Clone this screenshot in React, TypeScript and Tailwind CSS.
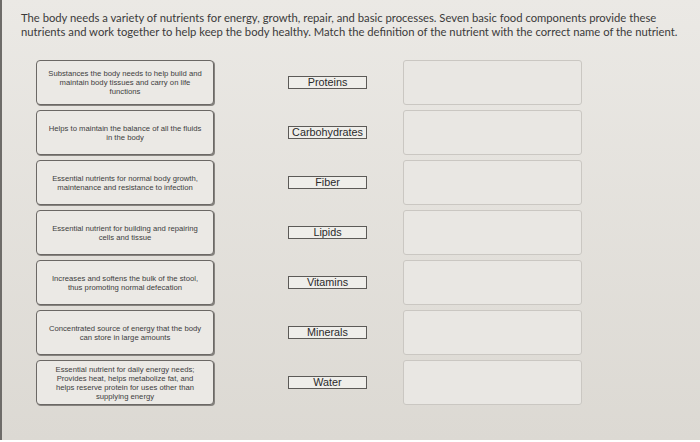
const rows = [
  {
    definition: ["Substances the body needs to help build and", "maintain body tissues and carry on life", "functions"],
    nutrient: "Proteins",
  },
  {
    definition: ["Helps to maintain the balance of all the fluids", "in the body"],
    nutrient: "Carbohydrates",
  },
  {
    definition: ["Essential nutrients for normal body growth,", "maintenance and resistance to infection"],
    nutrient: "Fiber",
  },
  {
    definition: ["Essential nutrient for building and repairing", "cells and tissue"],
    nutrient: "Lipids",
  },
  {
    definition: ["Increases and softens the bulk of the stool,", "thus promoting normal defecation"],
    nutrient: "Vitamins",
  },
  {
    definition: ["Concentrated source of energy that the body", "can store in large amounts"],
    nutrient: "Minerals",
  },
  {
    definition: [
      "Essential nutrient for daily energy needs;",
      "Provides heat, helps metabolize fat, and",
      "helps reserve protein for uses other than",
      "supplying energy",
    ],
    nutrient: "Water",
  },
];

export default function App() {
  return (
    <div className="h-[440px] w-[700px] border-l-2 border-[#6e6c69] bg-linear-to-b from-[#ebe9e5] to-[#dcd9d3] overflow-hidden">
      <p className="pl-[19px] pt-[11px] text-[11.25px] leading-[14px] text-[#3a3a3a] whitespace-nowrap font-['Lato',sans-serif]">
        The body needs a variety of nutrients for energy, growth, repair, and basic processes. Seven basic food components provide these
        <br />
        nutrients and work together to help keep the body healthy. Match the definition of the nutrient with the correct name of the nutrient.
      </p>

      <div className="mt-[21px] flex flex-col gap-[5px] pl-[34px]">
        {rows.map((row, i) => (
          <div key={i} className="flex items-center h-[45px]">
            <div className="w-[178px] h-full flex flex-col items-center justify-center rounded-[4px] border border-[#6b6865] bg-[#ebe9e5] shadow-[1px_1px_0_#86837f] text-center text-[7.7px] leading-[9px] text-[#404040] font-['Liberation_Sans',sans-serif]">
              {row.definition.map((line, j) => (
                <span key={j} className="whitespace-nowrap">{line}</span>
              ))}
            </div>

            <div className="ml-[74px] w-[79px] h-[13px] flex items-center justify-center border border-[#5c5a57] bg-[#efeeea] text-[10.8px] leading-none text-[#2a2a2a] font-['Liberation_Sans',sans-serif] overflow-hidden">
              {row.nutrient}
            </div>

            <div className="ml-[36px] w-[179px] h-full rounded-[3px] border border-[#cac7c2] bg-[#e9e7e3]" />
          </div>
        ))}
      </div>
    </div>
  );
}
